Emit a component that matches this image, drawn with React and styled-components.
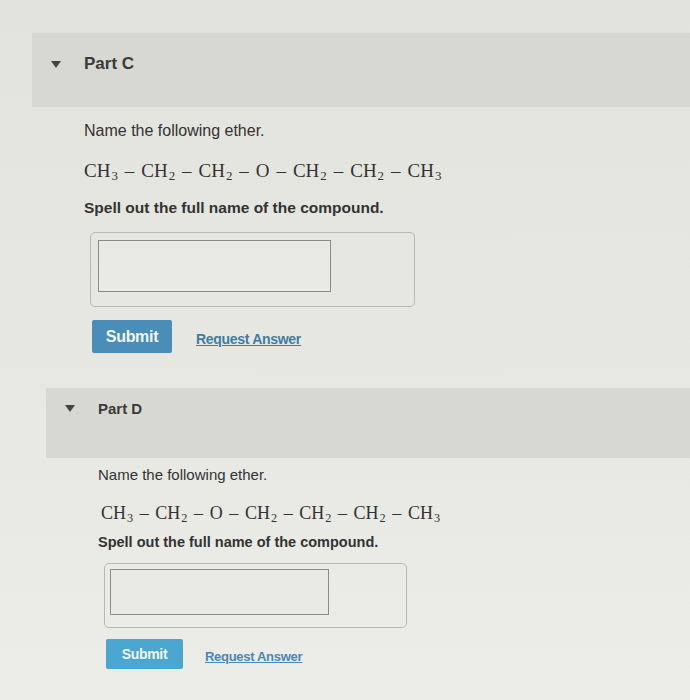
import React from "react";
import styled, { createGlobalStyle } from "styled-components";

const GlobalStyle = createGlobalStyle`
  html, body {
    margin: 0;
    padding: 0;
    background: #e6e6e0;
    font-family: "Liberation Sans", Arial, sans-serif;
    color: #333;
  }
`;

const Page = styled.div`
  width: 690px;
  height: 700px;
  overflow: hidden;
  padding-top: 33px;
  box-sizing: border-box;
  background: linear-gradient(180deg, #e3e3dd 0%, #e8e8e3 55%, #ecece8 100%);
`;

const Section = styled.section`
  margin-left: ${(p) => p.$indent}px;
  margin-bottom: ${(p) => p.$gap || 0}px;
`;

const Header = styled.div`
  height: ${(p) => p.$h}px;
  background: #d8d8d2;
  display: flex;
  align-items: center;
  padding-left: ${(p) => p.$pad}px;
  gap: ${(p) => p.$gapX}px;
`;

const Caret = styled.span`
  width: 0;
  height: 0;
  border-left: 5px solid transparent;
  border-right: 5px solid transparent;
  border-top: 7px solid #444;
  margin-bottom: ${(p) => p.$lift}px;
`;

const Title = styled.span`
  font-size: ${(p) => p.$size}px;
  font-weight: bold;
  color: #3a3a3a;
  margin-bottom: ${(p) => p.$lift}px;
`;

const Body = styled.div`
  padding-left: ${(p) => p.$pad}px;
  padding-top: ${(p) => p.$top}px;
`;

const Prompt = styled.p`
  margin: 0;
  font-size: ${(p) => p.$size}px;
  color: #333;
`;

const Formula = styled.p`
  margin: ${(p) => p.$mt}px 0 0 ${(p) => p.$ml || 0}px;
  font-family: "Liberation Serif", "Times New Roman", serif;
  font-size: ${(p) => p.$size}px;
  color: #333;
  word-spacing: ${(p) => p.$ws}px;
  sub {
    font-size: 0.68em;
    vertical-align: -0.25em;
    margin-left: 1px;
  }
`;

const Instruction = styled.p`
  margin: ${(p) => p.$mt}px 0 0 0;
  font-size: ${(p) => p.$size}px;
  font-weight: bold;
  color: #333;
`;

const AnswerBox = styled.div`
  margin: ${(p) => p.$mt}px 0 0 ${(p) => p.$ml}px;
  width: ${(p) => p.$w}px;
  height: ${(p) => p.$h}px;
  border: 1px solid #b8b8b2;
  border-radius: 5px;
  box-sizing: border-box;
  padding: ${(p) => p.$pad}px;
`;

const Input = styled.div`
  width: ${(p) => p.$w}px;
  height: ${(p) => p.$h}px;
  border: 1.5px solid #8a8a86;
  box-sizing: border-box;
  background: #eaeae5;
`;

const Actions = styled.div`
  display: flex;
  align-items: center;
  gap: ${(p) => p.$gap}px;
  margin: ${(p) => p.$mt}px 0 0 ${(p) => p.$ml}px;
`;

const SubmitButton = styled.button`
  width: ${(p) => p.$w}px;
  height: ${(p) => p.$h}px;
  border: none;
  border-radius: 2px;
  background: ${(p) => p.$bg};
  color: #f2f6f8;
  font-family: "Liberation Sans", Arial, sans-serif;
  font-size: ${(p) => p.$size}px;
  font-weight: bold;
  letter-spacing: -0.3px;
`;

const RequestLink = styled.a`
  font-size: ${(p) => p.$size}px;
  font-weight: bold;
  color: ${(p) => p.$color};
  text-decoration: underline;
  letter-spacing: -0.3px;
  margin-top: 4px;
`;

function Chain({ groups }) {
  return groups.map((g, i) => (
    <React.Fragment key={i}>
      {i > 0 && " \u2013 "}
      {g === "O" ? "O" : (
        <>
          CH<sub>{g}</sub>
        </>
      )}
    </React.Fragment>
  ));
}

function Part({ name, groups, s }) {
  return (
    <Section $indent={s.indent} $gap={s.gap}>
      <Header $h={s.headH} $pad={s.caretPad} $gapX={s.titleGap}>
        <Caret $lift={s.lift} />
        <Title $size={s.titleSize} $lift={s.lift}>{name}</Title>
      </Header>
      <Body $pad={s.bodyPad} $top={s.bodyTop}>
        <Prompt $size={s.textSize}>Name the following ether.</Prompt>
        <Formula $size={s.formulaSize} $mt={s.formulaMt} $ws={s.ws} $ml={s.formulaMl}>
          <Chain groups={groups} />
        </Formula>
        <Instruction $size={s.instrSize} $mt={s.instrMt}>
          Spell out the full name of the compound.
        </Instruction>
        <AnswerBox $mt={s.boxMt} $ml={s.boxMl} $w={s.boxW} $h={s.boxH} $pad={s.boxPad}>
          <Input $w={s.inputW} $h={s.inputH} />
        </AnswerBox>
        <Actions $gap={s.actGap} $mt={s.actMt} $ml={s.actMl}>
          <SubmitButton $w={s.btnW} $h={s.btnH} $bg={s.btnBg} $size={s.btnSize}>
            Submit
          </SubmitButton>
          <RequestLink $size={s.linkSize} $color={s.linkColor}>Request Answer</RequestLink>
        </Actions>
      </Body>
    </Section>
  );
}

const partC = {
  indent: 32, gap: 35, headH: 74, caretPad: 19, titleGap: 23, lift: 12, titleSize: 17,
  bodyPad: 52, bodyTop: 15, textSize: 16, formulaSize: 19, formulaMt: 20, ws: 2.2,
  instrSize: 15.5, instrMt: 15, boxMt: 15, boxMl: 6, boxW: 325, boxH: 75, boxPad: 7,
  inputW: 233, inputH: 52, actGap: 24, actMt: 13, actMl: 8, btnW: 80, btnH: 33,
  btnBg: "#4a8db8", btnSize: 16, linkSize: 14, linkColor: "#3d7ca4",
};

const partD = {
  indent: 46, gap: 0, headH: 70, caretPad: 19, titleGap: 23, lift: 30, titleSize: 15,
  bodyPad: 52, bodyTop: 8, textSize: 15, formulaSize: 18, formulaMt: 20, ws: 2.1, formulaMl: 3,
  instrSize: 14.5, instrMt: 8, boxMt: 13, boxMl: 6, boxW: 303, boxH: 65, boxPad: 5,
  inputW: 219, inputH: 46, actGap: 22, actMt: 11, actMl: 8, btnW: 77, btnH: 30,
  btnBg: "#4ba6d0", btnSize: 14, linkSize: 13, linkColor: "#4a88b2",
};

export default function App() {
  return (
    <>
      <GlobalStyle />
      <Page>
        <Part name="Part C" groups={["3", "2", "2", "O", "2", "2", "3"]} s={partC} />
        <Part name="Part D" groups={["3", "2", "O", "2", "2", "2", "3"]} s={partD} />
      </Page>
    </>
  );
}
